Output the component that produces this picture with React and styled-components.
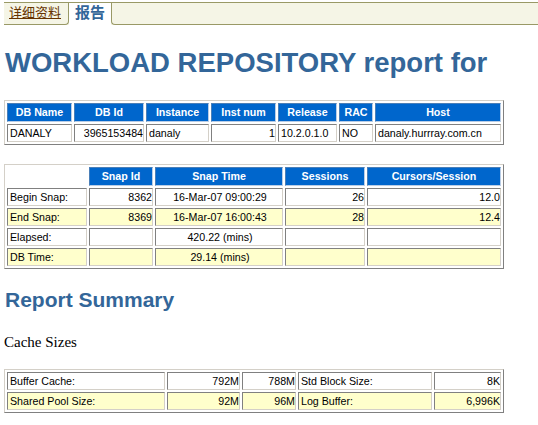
import React from 'react';
import styled, { createGlobalStyle } from 'styled-components';

const Global = createGlobalStyle`
  html, body { margin: 0; padding: 0; background: #ffffff; }
  body { font-family: "Liberation Sans", Arial, sans-serif; color: #000; }
`;

const Page = styled.div`
  padding-left: 4px;
`;

const TabStrip = styled.div`
  display: flex;
  margin-top: 2px;
  border-top: 1px solid #999966;
  background: #f5f5e6;
  height: 22px;
`;

const Tab = styled.div`
  box-sizing: border-box;
  height: 22px;
  display: flex;
  align-items: flex-start;
  font-family: "Noto Sans CJK SC", sans-serif;
  ${p => p.$active ? `
    background: #ffffff;
    color: #336699;
    font-weight: bold;
    font-size: 15px;
    line-height: 17px;
    padding: 0 6px 0 6px;
  ` : `
    color: #663300;
    font-size: 13px;
    line-height: 15px;
    padding: 1px 7px 0 5px;
    border-bottom: 1px solid #999966;
    border-right: 1px solid #999966;
    border-bottom-right-radius: 4px;
  `}
`;

const TabLink = styled.span`
  text-decoration: underline;
  text-underline-offset: 1px;
`;

const TabFill = styled.div`
  flex: 1;
  box-sizing: border-box;
  height: 22px;
  border-bottom: 1px solid #999966;
  border-left: 1px solid #999966;
  border-bottom-left-radius: 4px;
`;

const Title = styled.h1`
  margin: 22px 0 0 1px;
  font: bold 27.5px/32px "Liberation Sans", Arial, sans-serif;
  color: #336699;
`;

const SubTitle = styled.h2`
  margin: ${p => p.$top}px 0 0 1px;
  font: bold 21px/26px "Liberation Sans", Arial, sans-serif;
  color: #336699;
`;

const SectionLabel = styled.h3`
  margin: ${p => p.$top}px 0 0 0;
  font: normal 15px/18px "Liberation Serif", "Times New Roman", serif;
  color: #000;
`;

const Table = styled.table`
  margin-top: ${p => p.$top}px;
  width: 500px;
  table-layout: fixed;
  border-collapse: separate;
  border-spacing: 2px;
  border: 1px solid;
  border-color: #d4d0c8 #808080 #808080 #d4d0c8;
  font-size: 10.67px;
`;

const Th = styled.th`
  box-sizing: border-box;
  width: ${p => p.$w}px;
  padding: 1px 1px 2px 1px;
  line-height: 14px;
  height: 19px;
  font: bold 10.67px/14px "Liberation Sans", Arial, sans-serif;
  text-align: center;
  white-space: nowrap;
  ${p => p.$blank ? `
    background: transparent;
    border: 0;
  ` : `
    background: #0066cc;
    color: #ffffff;
    border: 1px solid;
    border-color: #4a7fb8 #b9cde6 #b9cde6 #4a7fb8;
  `}
`;

const Td = styled.td`
  box-sizing: border-box;
  width: ${p => p.$w ? `${p.$w}px` : 'auto'};
  height: 18px;
  padding: 1px 0 1px 2px;
  font: 10.67px/14px "Liberation Sans", Arial, sans-serif;
  color: #000;
  white-space: nowrap;
  overflow: hidden;
  text-align: ${p => p.$align || 'left'};
  background: ${p => p.$alt ? '#ffffcc' : '#ffffff'};
  border: 1px solid;
  border-color: #808080 #d4d0c8 #d4d0c8 #808080;
`;

const dbCols = [
  { h: 'DB Name', w: 65, a: 'left' },
  { h: 'DB Id', w: 70, a: 'right' },
  { h: 'Instance', w: 63, a: 'left' },
  { h: 'Inst num', w: 65, a: 'right' },
  { h: 'Release', w: 59, a: 'left' },
  { h: 'RAC', w: 34, a: 'left' },
  { h: 'Host', w: 126, a: 'left' },
];
const dbRow = ['DANALY', '3965153484', 'danaly', '1', '10.2.0.1.0', 'NO', 'danaly.hurrray.com.cn'];

const snapCols = [
  { h: '', w: 80, a: 'left' },
  { h: 'Snap Id', w: 64, a: 'right' },
  { h: 'Snap Time', w: 128, a: 'center' },
  { h: 'Sessions', w: 80, a: 'right' },
  { h: 'Cursors/Session', w: 134, a: 'right' },
];
const snapRows = [
  ['Begin Snap:', '8362', '16-Mar-07 09:00:29', '26', '12.0'],
  ['End Snap:', '8369', '16-Mar-07 16:00:43', '28', '12.4'],
  ['Elapsed:', '', '420.22 (mins)', '', ''],
  ['DB Time:', '', '29.14 (mins)', '', ''],
];

const cacheCols = [
  { w: 158, a: 'left' },
  { w: 73, a: 'right' },
  { w: 54, a: 'right' },
  { w: 134, a: 'left' },
  { w: 67, a: 'right' },
];
const cacheRows = [
  ['Buffer Cache:', '792M', '788M', 'Std Block Size:', '8K'],
  ['Shared Pool Size:', '92M', '96M', 'Log Buffer:', '6,996K'],
];

export default function App() {
  return (
    <>
      <Global />
      <Page>
        <TabStrip>
          <Tab><TabLink>详细资料</TabLink></Tab>
          <Tab $active>报告</Tab>
          <TabFill />
        </TabStrip>

        <Title>WORKLOAD REPOSITORY report for</Title>

        <Table $top={21}>
          <thead>
            <tr>
              {dbCols.map(c => <Th key={c.h} $w={c.w}>{c.h}</Th>)}
            </tr>
          </thead>
          <tbody>
            <tr>
              {dbRow.map((v, i) => <Td key={i} $align={dbCols[i].a}>{v}</Td>)}
            </tr>
          </tbody>
        </Table>

        <Table $top={19}>
          <thead>
            <tr>
              {snapCols.map((c, i) => <Th key={i} $w={c.w} $blank={!c.h}>{c.h}</Th>)}
            </tr>
          </thead>
          <tbody>
            {snapRows.map((r, ri) => (
              <tr key={ri}>
                {r.map((v, i) => (
                  <Td key={i} $align={snapCols[i].a} $alt={ri % 2 === 1}>{v || '\u00a0'}</Td>
                ))}
              </tr>
            ))}
          </tbody>
        </Table>

        <SubTitle $top={18}>Report Summary</SubTitle>
        <SectionLabel $top={20}>Cache Sizes</SectionLabel>

        <Table $top={18}>
          <tbody>
            {cacheRows.map((r, ri) => (
              <tr key={ri}>
                {r.map((v, i) => (
                  <Td key={i} $w={ri === 0 ? cacheCols[i].w : undefined} $align={cacheCols[i].a} $alt={ri % 2 === 1}>{v}</Td>
                ))}
              </tr>
            ))}
          </tbody>
        </Table>
      </Page>
    </>
  );
}
